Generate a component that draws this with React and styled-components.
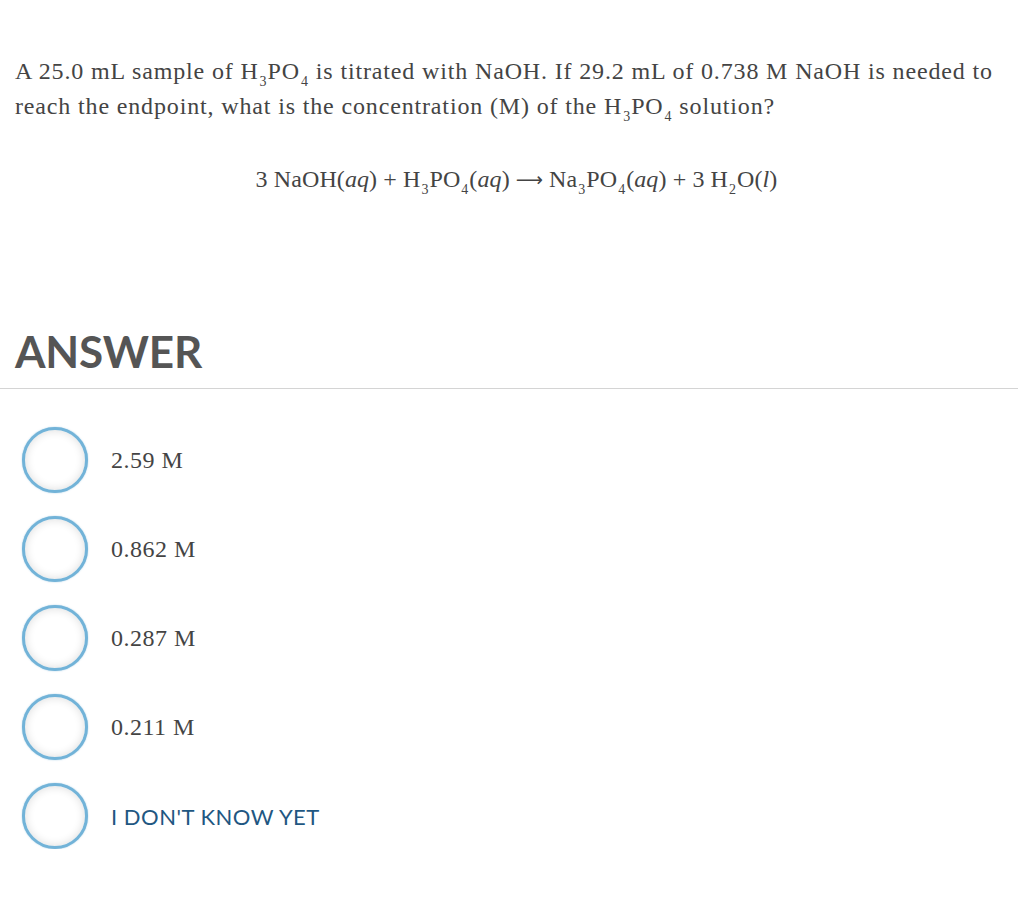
import React from "react";
import styled, { createGlobalStyle } from "styled-components";

const Global = createGlobalStyle`
  html, body { margin: 0; padding: 0; background: #fff; }
  body { font-family: "Liberation Serif", serif; }
`;

const Page = styled.div`
  padding: 54px 6px 0 15px;
  color: #444;
`;

const Question = styled.p`
  margin: 0;
  font-family: "Liberation Serif", serif;
  font-size: 24px;
  line-height: 35px;
  letter-spacing: 0.85px;
  color: #444;
`;

const Sub = styled.sub`
  font-size: 14px;
  vertical-align: -7px;
  line-height: 0;
  letter-spacing: 0;
  margin: 0 1px;
`;

const Equation = styled.p`
  margin: 38px 0 0;
  text-align: center;
  font-family: "Liberation Serif", serif;
  font-size: 24px;
  line-height: 34px;
  letter-spacing: 0.1px;
  color: #444;
`;

const Arrow = styled.span`
  font-family: "DejaVu Sans", sans-serif;
  font-size: 19px;
  margin: 0 6px;
  vertical-align: 1px;
`;

const Heading = styled.h2`
  margin: 130px 0 0;
  font-family: Lato, sans-serif;
  font-weight: 700;
  font-size: 44px;
  line-height: 50px;
  color: #555;
  letter-spacing: -0.2px;
`;

const Divider = styled.hr`
  margin: 12px 0 0 -15px;
  border: 0;
  border-top: 1px solid #d4d4d4;
  width: 1018px;
`;

const Options = styled.div`
  display: flex;
  flex-direction: column;
  gap: 23px;
  margin-top: 38px;
  padding-left: 7px;
`;

const Option = styled.label`
  display: flex;
  align-items: center;
  gap: 23px;
  cursor: pointer;
`;

const Radio = styled.span`
  width: 60px;
  height: 60px;
  border-radius: 50%;
  border: 3px solid #72b3d8;
  box-shadow: inset 0 0 10px rgba(0, 0, 0, 0.14), 0 0 1.5px rgba(100, 170, 210, 0.7);
  background: #fff;
  flex: none;
`;

const OptionText = styled.span`
  font-family: ${(p) => (p.$dk ? "Lato, sans-serif" : '"Liberation Serif", serif')};
  font-size: ${(p) => (p.$dk ? "22px" : "24px")};
  letter-spacing: 0.5px;
  color: ${(p) => (p.$dk ? "#1f5782" : "#444")};
`;

const options = ["2.59 M", "0.862 M", "0.287 M", "0.211 M"];

export default function App() {
  return (
    <>
      <Global />
      <Page>
        <Question>
          A 25.0 mL sample of H<Sub>3</Sub>PO<Sub>4</Sub> is titrated with NaOH. If 29.2 mL of
          0.738 M NaOH is needed to reach the endpoint, what is the concentration (M) of the H
          <Sub>3</Sub>PO<Sub>4</Sub> solution?
        </Question>
        <Equation>
          3 NaOH(<i>aq</i>) + H<Sub>3</Sub>PO<Sub>4</Sub>(<i>aq</i>)<Arrow>⟶</Arrow>Na<Sub>3</Sub>PO
          <Sub>4</Sub>(<i>aq</i>) + 3 H<Sub>2</Sub>O(<i>l</i>)
        </Equation>
        <Heading>ANSWER</Heading>
        <Divider />
        <Options>
          {options.map((o) => (
            <Option key={o}>
              <Radio />
              <OptionText>{o}</OptionText>
            </Option>
          ))}
          <Option>
            <Radio />
            <OptionText $dk>I DON'T KNOW YET</OptionText>
          </Option>
        </Options>
      </Page>
    </>
  );
}
